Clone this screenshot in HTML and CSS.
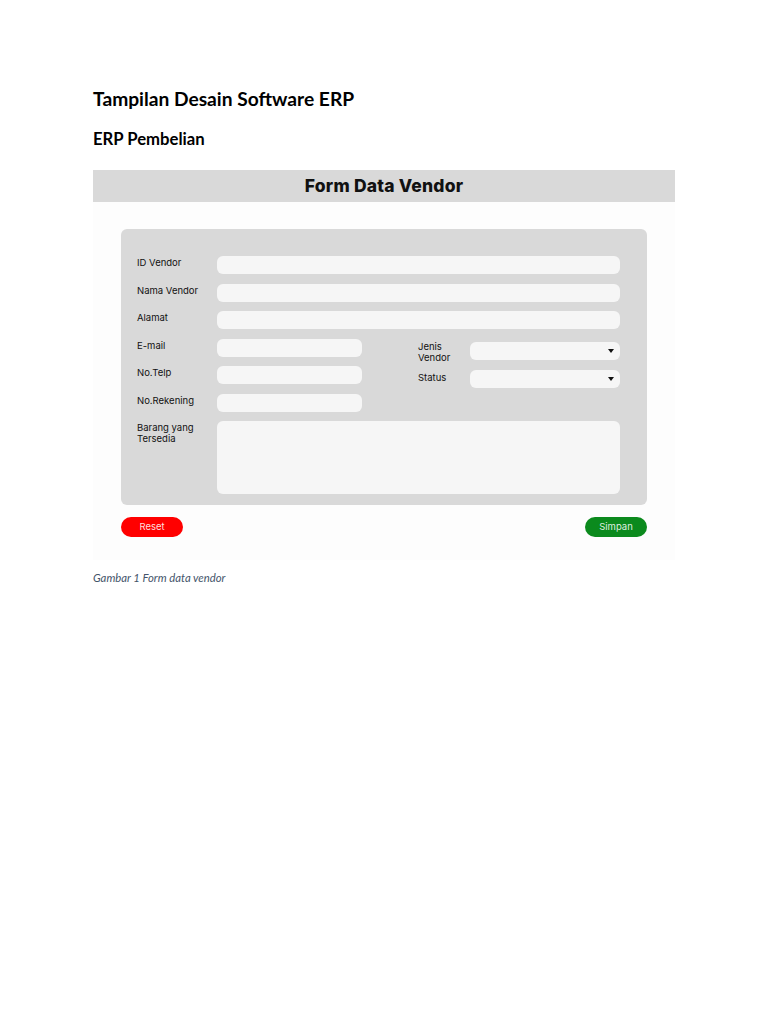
FILE: index.html
```html
<!DOCTYPE html>
<html lang="id">
<head>
<meta charset="utf-8">
<title>Tampilan Desain Software ERP</title>
<link rel="stylesheet" href="styles.css">
</head>
<body>
<main class="doc">
  <h1 class="doc-title">Tampilan Desain Software ERP</h1>
  <h2 class="doc-sub">ERP Pembelian</h2>

  <figure class="figure">
    <div class="mock">
      <div class="mock-header">Form Data Vendor</div>
      <div class="mock-body">
        <form class="panel">
          <label class="lbl r1">ID Vendor</label>
          <div class="field wide r1"></div>

          <label class="lbl r2">Nama Vendor</label>
          <div class="field wide r2"></div>

          <label class="lbl r3">Alamat</label>
          <div class="field wide r3"></div>

          <label class="lbl r4">E-mail</label>
          <div class="field short r4"></div>
          <label class="lbl rlbl r4">Jenis<br>Vendor</label>
          <div class="field select r4 shift"><span class="caret"></span></div>

          <label class="lbl r5">No.Telp</label>
          <div class="field short r5"></div>
          <label class="lbl rlbl r5 shift">Status</label>
          <div class="field select r5 shift"><span class="caret"></span></div>

          <label class="lbl r6">No.Rekening</label>
          <div class="field short r6"></div>

          <label class="lbl r7">Barang yang<br>Tersedia</label>
          <div class="field area r7"></div>
        </form>
        <div class="actions">
          <span class="btn btn-reset">Reset</span>
          <span class="btn btn-save">Simpan</span>
        </div>
      </div>
    </div>
    <figcaption class="caption">Gambar 1 Form data vendor</figcaption>
  </figure>
</main>
</body>
</html>
```

FILE: styles.css
```css
* { box-sizing: border-box; }

html, body {
  margin: 0;
  padding: 0;
  background: #ffffff;
}

.doc {
  padding: 85px 0 0 93px;
  width: 675px;
  font-family: Lato, "Liberation Sans", sans-serif;
  color: #000;
}

.doc-title {
  margin: 0;
  font-size: 19.2px;
  font-weight: 700;
  line-height: 27px;
}

.doc-sub {
  margin: 16px 0 0;
  font-size: 16.7px;
  font-weight: 700;
  line-height: 22px;
}

.figure {
  margin: 20px 0 0;
  width: 582px;
}

.mock {
  background: #fdfdfd;
}

.mock-header {
  height: 32px;
  background: #d9d9d9;
  text-align: center;
  font-family: Inter, "Noto Sans", sans-serif;
  font-weight: 800;
  font-size: 17.5px;
  line-height: 32px;
  color: #111;
  letter-spacing: 0.2px;
}

.mock-body {
  padding: 27px 28px 23px 28px;
}

.panel {
  margin: 0;
  background: #d9d9d9;
  border-radius: 6px;
  padding: 27px 27px 11px 16px;
  display: grid;
  grid-template-columns: 80px 145px 56px 52px 150px;
  grid-template-rows: repeat(6, 18px) 73px;
  row-gap: 9.5px;
  font-family: Inter, "Liberation Sans", sans-serif;
}

.r1 { grid-row: 1; }
.r2 { grid-row: 2; }
.r3 { grid-row: 3; }
.r4 { grid-row: 4; }
.r5 { grid-row: 5; }
.r6 { grid-row: 6; }
.r7 { grid-row: 7; }

.lbl {
  grid-column: 1;
  font-size: 9.5px;
  line-height: 11px;
  color: #111;
  padding-top: 1px;
  white-space: nowrap;
}

.rlbl {
  grid-column: 4;
  padding-top: 2px;
}

.field {
  background: #f6f6f6;
  border-radius: 6px;
  height: 18px;
}

.wide { grid-column: 2 / 6; }
.short { grid-column: 2; }
.select {
  grid-column: 5;
  position: relative;
}
.area {
  grid-column: 2 / 6;
  height: 73px;
}

.shift { margin-top: 4px; }
.select.r4.shift { margin-top: 3px; }

.caret {
  position: absolute;
  right: 6px;
  top: 7px;
  width: 0;
  height: 0;
  border-left: 3px solid transparent;
  border-right: 3px solid transparent;
  border-top: 4px solid #111;
}

.actions {
  margin-top: 12px;
  display: flex;
  justify-content: space-between;
}

.btn {
  width: 62px;
  height: 20px;
  border-radius: 10px;
  font-family: Inter, "Liberation Sans", sans-serif;
  font-size: 9.5px;
  line-height: 19px;
  text-align: center;
  color: rgba(255, 255, 255, 0.88);
}

.btn-reset { background: #ff0000; }
.btn-save { background: #0b8a1d; }

.caption {
  margin-top: 11px;
  font-family: Lato, "Liberation Sans", sans-serif;
  font-style: italic;
  font-size: 11.3px;
  line-height: 14px;
  color: #44546a;
}
```
